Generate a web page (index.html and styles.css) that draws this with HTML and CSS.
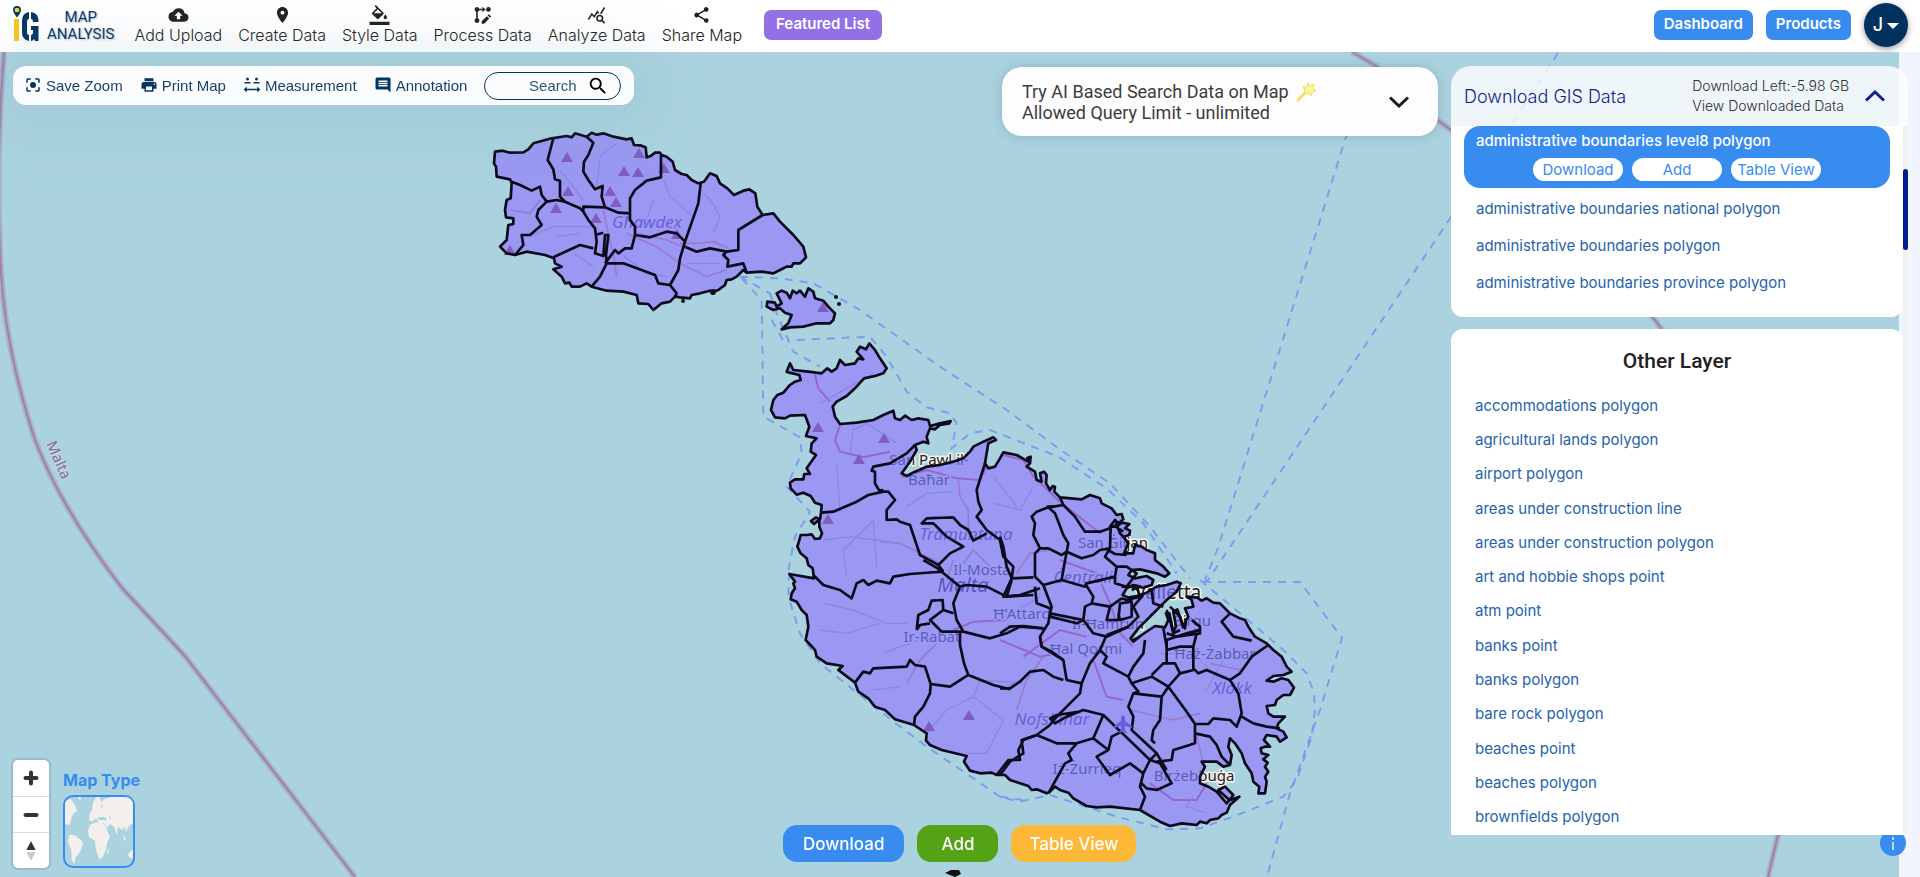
FILE: index.html
```html
<!DOCTYPE html>
<html lang="en">
<head>
<meta charset="utf-8">
<title>Map Analysis</title>
<link rel="stylesheet" href="styles.css">
</head>
<body>
<svg class="sprite" aria-hidden="true">
  <symbol id="i-cloud" viewBox="0 0 24 24"><path d="M19.35 10.04A7.49 7.49 0 0 0 12 4C9.11 4 6.6 5.64 5.35 8.04A5.99 5.99 0 0 0 0 14c0 3.31 2.69 6 6 6h13c2.76 0 5-2.24 5-5 0-2.64-2.05-4.78-4.65-4.96zM14 13v4h-4v-4H7l5-5 5 5h-3z"/></symbol>
  <symbol id="i-pin" viewBox="0 0 24 24"><path d="M12 2C8.13 2 5 5.13 5 9c0 5.25 7 13 7 13s7-7.75 7-13c0-3.87-3.13-7-7-7zm0 9.500a2.500 2.500 0 0 1 0-5 2.500 2.500 0 0 1 0 5z"/></symbol>
  <symbol id="i-fill" viewBox="0 0 24 24"><path d="M16.560 8.940 7.620 0 6.210 1.410l2.380 2.380-5.150 5.150a1.490 1.490 0 0 0 0 2.120l5.500 5.500c.29.290.680.440 1.060.440s.770-.150 1.060-.440l5.500-5.500c.590-.580.590-1.530 0-2.120zM5.210 10 10 5.210 14.790 10H5.210zM19 11.500s-2 2.170-2 3.500c0 1.100.9 2 2 2s2-.9 2-2c0-1.330-2-3.500-2-3.500zM0 20h24v4H0z"/></symbol>
  <symbol id="i-process" viewBox="0 0 24 24"><path d="M5 2a3 3 0 0 1 2.800 2H12V1.500L16 5l-4 3.500V6H7.800A3 3 0 0 1 6 7.800v8.400A3 3 0 1 1 4 16.200V7.800A3 3 0 0 1 5 2zM19.500 2a3 3 0 1 1 0 6 3 3 0 0 1 0-6zM20 11l3 3-1.500 1.500-3-3zM17.500 13.500l3 3L14 23h-3v-3z"/></symbol>
  <symbol id="i-analyze" viewBox="0 0 24 24"><path d="M19.880 18.470c.440-.700.700-1.510.700-2.390a4.500 4.500 0 1 0-4.500 4.500c.880 0 1.700-.260 2.390-.700L21.580 23 23 21.580zm-3.800.110a2.500 2.500 0 1 1 0-5 2.500 2.500 0 0 1 0 5zm-.360-8.500c-.740.020-1.450.180-2.100.450l-.550-.830-3.800 6.180-3.010-3.520-3.630 5.810L1 17l5-8 3 3.500L13 6zm2.590.5a6.100 6.100 0 0 0-2-.480L21.380 2 23 3.180z"/></symbol>
  <symbol id="i-share" viewBox="0 0 24 24"><path d="M18 16.080c-.760 0-1.440.300-1.960.770L8.910 12.700a3.300 3.300 0 0 0 0-1.390l7.050-4.110A2.990 2.990 0 1 0 15 5c0 .240.040.470.090.700L8.040 9.810a3 3 0 1 0 0 4.380l7.120 4.160a2.820 2.820 0 0 0-.080.650A2.920 2.920 0 1 0 18 16.080z"/></symbol>
  <symbol id="i-focus" viewBox="0 0 24 24"><path d="M5 15H3v4c0 1.100.9 2 2 2h4v-2H5zM5 5h4V3H5a2 2 0 0 0-2 2v4h2zM19 3h-4v2h4v4h2V5a2 2 0 0 0-2-2zM19 19h-4v2h4a2 2 0 0 0 2-2v-4h-2zM12 8a4 4 0 1 0 0 8 4 4 0 0 0 0-8z"/></symbol>
  <symbol id="i-print" viewBox="0 0 24 24"><path d="M19 8H5a3 3 0 0 0-3 3v6h4v4h12v-4h4v-6a3 3 0 0 0-3-3zm-3 11H8v-5h8v5zm3-7a1 1 0 1 1 0-2 1 1 0 0 1 0 2zM18 3H6v4h12z"/></symbol>
  <symbol id="i-measure" viewBox="0 0 24 24"><circle cx="6" cy="4" r="2"/><circle cx="18" cy="4" r="2"/><path d="M2 8h8v2H2zM14 8h8v2h-8zM5 14v3h14v-3l4 4-4 4v-3H5v3l-4-4z"/></symbol>
  <symbol id="i-note" viewBox="0 0 24 24"><path d="M22 4a2 2 0 0 0-2-2H4a2 2 0 0 0-2 2v12c0 1.100.9 2 2 2h14l4 4zM18 14H6v-2h12zm0-3H6V9h12zm0-3H6V6h12z"/></symbol>
  <symbol id="i-search" viewBox="0 0 24 24"><path d="M15.500 14h-.790l-.280-.270A6.500 6.500 0 1 0 13.730 14.430l.270.280v.790l5 4.990L20.490 19zm-6 0a4.500 4.500 0 1 1 0-9 4.500 4.500 0 0 1 0 9z"/></symbol>
</svg>

<header class="topbar">
  <a class="brand" href="#">
    <svg class="brand-mark" viewBox="0 0 26 36" aria-hidden="true">
      <path d="M4 0a4 4 0 0 1 4 4c0 2.600-4 7.500-4 7.500S0 6.600 0 4a4 4 0 0 1 4-4z" fill="#053563"/>
      <circle cx="4" cy="4" r="2.300" fill="#fdd32d"/>
      <path d="M1 13h5v22H1z" fill="#fbc51b"/>
      <path d="M16 6v7q-2 0-2 3v10q0 3 2 3v6q-7-1-7-9V15q0-8 7-9zM18 6q8 1 7.500 10H20q0-3-2-3zM18 20h7.500v15H22l-1-2q-1 2-3 2v-6q2 0 2-3v-2h-2z" fill="#053563"/>
    </svg>
    <span class="brand-name">MAP<br>ANALYSIS</span>
  </a>
  <nav class="menu">
    <button><svg class="icon-21"><use href="#i-cloud"/></svg>Add Upload</button>
    <button><svg><use href="#i-pin"/></svg>Create Data</button>
    <button><svg class="icon-21"><use href="#i-fill"/></svg>Style Data</button>
    <button><svg><use href="#i-process"/></svg>Process Data</button>
    <button><svg><use href="#i-analyze"/></svg>Analyze Data</button>
    <button><svg><use href="#i-share"/></svg>Share Map</button>
  </nav>
  <button class="chip chip-violet">Featured List</button>
  <div class="account">
    <a class="chip" href="#">Dashboard</a>
    <a class="chip" href="#">Products</a>
    <button class="avatar" aria-label="Account menu">J<span class="caret"></span></button>
  </div>
</header>

<main class="workspace">
  <svg class="map" viewBox="0 52 1899 825" preserveAspectRatio="xMidYMid slice" role="img" aria-label="Map of Malta">
    <defs>
      <path id="gozo" transform="translate(480 120) scale(.33333)" d="M45,95 L68,92 90,98 130,97 145,88 160,70 215,55 260,48 275,52 285,40 305,46 320,50 335,38 350,44 370,40 400,50 440,58 455,55 462,75 480,76 497,82 500,112 512,108 525,98 540,98 545,105 560,110 578,125 585,150 605,162 620,165 635,180 655,190 672,185 690,160 710,168 720,190 742,205 762,225 790,212 808,208 826,220 832,260 848,285 880,280 900,305 940,345 970,380 978,412 960,430 940,430 935,440 920,440 900,450 880,460 845,455 800,458 790,450 770,470 755,478 740,480 735,495 715,510 700,515 690,512 660,520 635,525 630,535 600,532 585,530 570,545 545,550 520,570 505,552 475,550 470,525 430,515 380,512 335,500 320,490 300,500 275,500 268,488 255,490 245,470 220,448 245,440 225,430 222,415 195,405 140,395 105,405 80,400 60,380 80,360 85,315 100,312 100,295 78,292 75,270 80,240 92,235 95,190 90,178 50,170 48,140 42,130Z"/>
      <path id="comino" transform="translate(480 120) scale(.33333)" d="M890,520 L905,512 920,518 930,535 938,512 950,520 960,512 975,530 985,505 1000,515 1005,535 1030,542 1045,560 1065,580 1060,600 1050,610 1010,610 970,620 930,622 905,628 925,610 935,585 915,578 900,565 880,570 860,560 862,545 885,548 890,560 905,550Z"/>
      <path id="malta" transform="translate(740 320) scale(.33333)" d="M222,775 L218,745 205,735 200,715 182,700 172,680 178,660 182,645 200,645 215,643 225,657 240,655 246,640 238,620 238,598 222,612 213,603 228,592 240,598 243,578 245,555 225,548 212,528 190,518 170,524 152,505 150,488 165,478 190,478 193,462 210,462 200,445 228,405 212,395 215,370 230,355 198,348 208,320 195,285 150,287 135,295 105,292 93,270 100,240 112,225 130,218 150,195 165,185 182,180 178,165 148,158 140,155 150,130 160,150 205,155 245,160 262,145 275,155 290,145 300,120 315,135 345,130 355,115 370,118 350,95 360,80 378,88 388,70 405,90 420,115 440,145 430,160 405,168 372,175 345,205 320,228 290,245 278,260 285,290 300,312 350,308 400,300 430,285 460,272 465,295 480,300 495,287 515,300 535,295 565,300 570,318 600,310 632,303 628,310 600,315 585,328 570,325 560,350 565,370 550,365 525,375 530,390 510,425 485,460 500,468 525,455 560,440 600,435 640,425 670,415 690,395 700,380 730,365 760,352 768,360 745,370 740,400 735,430 745,445 765,440 780,415 790,397 830,405 865,425 862,414 872,410 870,430 860,440 885,455 890,480 905,485 900,460 912,455 920,465 918,490 930,510 938,498 945,500 943,515 960,532 1025,538 1050,525 1080,535 1085,550 1115,565 1130,585 1145,582 1150,598 1135,610 1125,600 1110,620 1130,620 1145,608 1168,612 1155,625 1170,632 1168,645 1150,650 1165,670 1152,700 1180,700 1185,675 1205,680 1220,690 1245,700 1245,720 1270,740 1288,760 1275,770 1250,760 1200,748 1175,750 1165,765 1185,775 1220,768 1240,780 1235,795 1210,803 1180,795 1160,805 1148,825 1165,833 1190,828 1220,818 1250,800 1280,795 1310,785 1322,790 1310,815 1280,840 1260,860 1235,885 1210,910 1195,925 1172,955 1180,965 1205,945 1245,918 1275,922 1285,900 1278,880 1288,880 1300,935 1308,920 1300,875 1312,868 1325,905 1335,925 1338,900 1345,890 1335,865 1360,860 1355,840 1340,830 1370,832 1385,842 1400,835 1420,848 1440,850 1470,880 1500,895 1515,900 1525,920 1545,950 1580,970 1600,990 1625,1010 1640,1040 1655,1055 1630,1065 1600,1068 1580,1082 1600,1085 1625,1075 1645,1080 1662,1103 1650,1125 1630,1125 1610,1140 1605,1155 1580,1158 1585,1180 1600,1190 1635,1190 1615,1210 1610,1225 1630,1235 1640,1252 1620,1265 1610,1250 1580,1245 1572,1260 1590,1280 1575,1280 1562,1285 1565,1300 1585,1305 1570,1318 1583,1328 1575,1340 1585,1355 1575,1370 1580,1385 1575,1420 1555,1420 1558,1400 1540,1385 1535,1360 1515,1330 1505,1300 1485,1270 1470,1255 1465,1280 1475,1305 1470,1335 1450,1340 1430,1325 1385,1325 1395,1340 1380,1370 1380,1390 1405,1400 1430,1415 1460,1450 1468,1440 1435,1410 1455,1400 1480,1425 1470,1440 1498,1430 1470,1455 1460,1478 1445,1485 1435,1495 1410,1500 1400,1510 1380,1505 1370,1515 1325,1510 1290,1518 1260,1505 1200,1470 1110,1460 1070,1462 1040,1458 1000,1435 985,1418 960,1410 945,1400 930,1415 920,1420 890,1408 875,1410 865,1398 840,1390 810,1380 795,1365 770,1365 755,1358 720,1360 690,1352 672,1325 680,1308 605,1290 570,1275 558,1262 560,1240 522,1215 465,1198 435,1170 405,1160 385,1135 355,1115 345,1088 295,1050 308,1038 260,1030 230,1010 225,990 197,960 205,920 200,885 185,870 170,845 152,838 155,820 165,805 160,790 165,785 148,762Z"/>
    </defs>

    <g class="sea-border">
      <path d="M4,52 Q-4,150 0,250 Q2,340 35,440 Q62,510 122,588 Q150,618 184,655 L355,877"/>
      <path d="M1352,52 L1376,66 L1440,122 Q1550,200 1655,320 Q1760,460 1790,620 Q1802,730 1778,835 L1768,877"/>
    </g>
    <g class="sea-border-core">
      <path d="M4,52 Q-4,150 0,250 Q2,340 35,440 Q62,510 122,588 Q150,618 184,655 L355,877"/>
      <path d="M1352,52 L1376,66 L1440,122 Q1550,200 1655,320 Q1760,460 1790,620 Q1802,730 1778,835 L1768,877"/>
    </g>

    <g class="ferry">
      <path d="M1558,53 L1451,217 1208,580 1192,590M1365,75 L1345,140 1218,548 1205,580M1203,582 L1300,582 1342,638 1320,710 1290,793 1267,877"/>
      <path transform="translate(1000 620) scale(.33333)" d="M600,-120 L750,5 850,90 920,160 942,220 945,270 935,350 890,480 850,530 700,590 600,625 500,628 350,590 150,525 60,545 0,530"/>
      <path transform="translate(760 560) scale(.33333)" d="M720,710 L800,722 M720,710 L640,655 500,560 400,485 300,405 180,310 120,220 85,110 88,20"/>
      <path transform="translate(740 320) scale(.33333)" d="M145,750 L165,650 210,575 140,500 185,400 180,352 70,290 65,-60 0,-130 M0,-130 L120,-125 220,-110 360,-30 600,140 800,270 955,385 1110,490 1230,620 1350,775M0,-130 L90,-80 M90,-80 L110,-20 160,95 240,140 M170,60 L390,50 440,110 500,215 560,262 630,280 650,310 635,385 690,340 750,330 955,410 1100,505 1210,610 1310,760M95,0 L140,80"/>
    </g>

    <g class="land">
      <use href="#gozo"/><use href="#comino"/><use href="#malta"/>
    </g>

    <g class="roads">
      <path transform="translate(740 320) scale(.33333)" class="road-major" d="M225,165 L235,205 270,245M300,315 L285,360 300,395 370,412 450,395M485,470 L560,450 650,475 720,480 740,440 M790,405 L850,420 880,470 960,545 1080,640M960,720 L1070,760 1110,850 1140,940 1180,980M850,1010 L960,930 1040,950 M780,960 L900,1010 1000,990M1060,1020 L1100,1130 1150,1140M1230,1390 L1300,1440 1370,1440 1400,1390M640,930 L700,905 800,900"/>
      <path transform="translate(740 320) scale(.33333)" class="road-mid" d="M655,480 L660,530 685,570 685,630M420,665 L480,670 600,730M670,730 L700,690 760,750M500,1090 L540,1020 600,960M830,1170 L860,1080 910,1010M1170,1170 L1300,1200 1380,1180M1370,1250 L1390,1330M1410,1030 L1500,1050M640,720 L620,780M830,760 L870,700 930,690"/>
      <path transform="translate(480 120) scale(.33333)" class="road-mid" d="M90,270 L150,280 180,240M370,270 L385,340 400,400 410,470M440,340 L530,380 600,430 680,470 740,450M600,370 L660,370 700,365 745,385M470,340 L560,360 610,380"/>
      <path transform="translate(740 320) scale(.33333)" class="road-minor" d="M250,660 L330,650 410,660 470,670M320,770 L310,690 400,600 410,740M300,575 L290,430M500,560 L560,520 640,515M240,250 L400,160M330,400 L340,330 380,310 470,370M240,930 L320,940 420,910M250,850 L340,870 440,910 500,910M400,1110 L480,1100M430,1000 L560,950M800,1100 L900,1050M560,1240 L620,1170 700,1130 790,1200 740,1300 680,1300M700,1130 L720,1080 860,1090M780,900 L900,830M1260,1000 L1360,1000 1460,1100M1400,1110 L1450,1020M1400,1480 L1340,1460 1360,1430M760,470 L800,520 830,560M880,500 L840,570 760,550"/>
      <path transform="translate(480 120) scale(.33333)" class="road-minor" d="M150,350 L220,320 340,320M230,350 L300,340M240,150 L280,200 310,240M360,120 L350,200M410,70 L360,110M550,180 L570,230 640,290M700,340 L720,290 700,250 670,220M280,400 L340,440M420,400 L500,460 560,470M620,430 L720,430M520,240 L500,300"/>
    </g>

    <g class="peaks">
      <path d="M567,152l6,10h-12zM568,186l6,10h-12zM556,203l6,10h-12zM624,166l6,10h-12zM639,148l6,10h-12zM638,167l6,10h-12zM610,186l6,10h-12zM616,197l6,10h-12zM596,213l6,10h-12zM664,163l6,10h-12zM677,229l6,10h-12zM510,245l6,10h-12zM823,302l6,10h-12zM818,422l6,10h-12zM884,433l6,10h-12zM859,454l6,10h-12zM828,514l6,10h-12zM969,710l6,10h-12zM929,721l6,10h-12z"/>
    </g>

    <g class="places">
      <text class="region" x="647" y="228">Għawdex</text>
      <text x="929" y="465">San Pawl il-</text>
      <text x="929" y="485">Baħar</text>
      <text class="region" x="966" y="540">Tramuntana</text>
      <text x="982" y="575">Il-Mosta</text>
      <text class="country" x="963" y="592">Malta</text>
      <text x="1022" y="619">Ħ'Attard</text>
      <text x="932" y="642">Ir-Rabat</text>
      <text x="1113" y="548">San Ġiljan</text>
      <text class="region" x="1083" y="583">Ċentrali</text>
      <text class="capital" x="1168" y="599">Valletta</text>
      <text x="1108" y="629">Il-Ħamrun</text>
      <text x="1192" y="626">Birgu</text>
      <text x="1086" y="654">Ħal Qormi</text>
      <text x="1215" y="659">Ħaż-Żabbar</text>
      <text class="region" x="1232" y="694">Xlokk</text>
      <text class="region" x="1052" y="725">Nofsinhar</text>
      <text x="1087" y="774">Iż-Żurrieq</text>
      <text x="1194" y="781">Birżebbuġa</text>
    </g>
    <text class="border-name" transform="translate(54 462) rotate(66)">Malta</text>

    <g class="tint">
      <use href="#gozo"/><use href="#comino"/><use href="#malta"/>
    </g>

    <g class="outline">
      <use href="#gozo"/><use href="#comino"/><use href="#malta"/>
      <path transform="translate(480 120) scale(.33333)" d="M220,55 L212,85 203,120 220,148 225,178 240,182 240,230 255,245 300,265 310,275M320,50 L340,68 325,105 312,125 310,155 325,180 345,208 368,198 365,230 375,262 310,260 310,275M375,262 L415,278 450,280 450,235 465,210 500,182 543,172 543,105M450,280 L450,300 465,320 465,345 455,385 435,385 415,400 405,390 375,430M310,275 L325,300 345,325 350,365 345,400 370,408 375,345 385,345 378,405 380,430 M345,345 L370,338M95,185 L120,195 155,212 180,200 185,225 200,245 175,270 170,290 185,315 150,345 125,345 130,375 105,405M200,245 L230,240 255,245M220,412 L300,375 340,385M380,430 L360,470 335,500M380,430 L430,430 525,465 535,490 570,495 590,520 585,530M465,345 L510,352 560,335 590,340 615,365 655,250 662,190M615,365 L600,415 595,450 570,495M615,380 L650,395 690,385 740,395 775,390 775,330 848,285M740,395 L730,405 745,420 742,440 790,430 800,458"/>
      <path transform="translate(740 320) scale(.33333)" d="M525,375 L500,400 450,430 400,440 395,452 405,455 405,490 418,512 430,510M245,578 L280,575 350,545 385,525 430,515 445,515 465,540 440,570 440,600 470,598 480,605 510,615 535,690 540,705 595,735 610,755M595,735 L630,700 670,680 620,650 580,610 545,610 560,595 640,592 660,615 685,630 700,662 740,640M735,430 L710,510 715,545 725,570 710,590 740,630 780,660 790,710 820,740 815,775M945,560 L920,560"/>
      <path transform="translate(1000 420) scale(.33333)" d="M180,232 L190,255 145,262 110,275 95,290 105,310 100,345 120,385 145,385 185,405 200,395 205,370 190,345 175,305 165,280 145,262M190,255 L225,290 255,335 300,335 330,325M200,395 L190,450 185,480 130,495 105,470 105,400 120,385M200,395 L245,415 280,405 300,390 330,385 315,410 350,440 345,470 260,490 255,500 185,480M330,385 L332,320M315,385 L345,402 380,405M350,440 L380,440 410,460 380,500 345,490 345,470M255,490 L280,530 275,550 330,560 365,535M275,550 L255,560 250,600 150,580 155,560 130,495M105,500 L110,550 150,565M35,475 L100,472M35,475 L10,530 60,525 120,505M0,350 L10,380 20,440 35,475M330,560 L320,600 355,600 360,550 395,545 395,590 360,600 355,580M150,580 L145,610 120,650 125,680 190,720M250,600 L280,640 320,650 385,620 415,590 400,560 430,525M365,535 L395,545M0,640 L30,620 70,618 130,625M250,600 L230,610 150,590M365,500 L410,500 420,530 380,540M455,510 L460,550 490,560M600,630 L560,640 500,660 M500,640 L530,650 600,640 600,620 575,600M690,580 L665,605 700,650 755,662M490,625 L500,680"/>
      <path transform="translate(1000 620) scale(.33333)" d="M120,50 L125,80 155,95 190,120 200,180 245,190 240,220 160,300 150,315 110,345 65,360 70,400 30,425 0,465M320,45 L300,90 270,130 245,190M320,45 L385,20M300,90 L320,110 310,130 385,170 400,140 430,100 435,60M385,170 L395,190 455,170 505,200 540,160 525,130 490,130 455,165M500,60 L500,130M500,90 L540,80 580,80 580,150 540,160M590,40 L580,80M580,145 L595,160 620,150 690,180 720,160 755,110 805,75M690,180 L715,220 725,280 710,320 690,300 640,295 625,312 585,312 560,275 505,200M725,290 L760,310 800,320 840,325M585,312 L585,370 520,390 515,420 470,425M585,340 L630,350 650,375 665,410 690,435M505,200 L485,230 480,300 460,330 455,360 465,370M485,230 L400,220 385,260 400,290 395,330 470,400 450,420 310,285 250,270 200,290 165,310 150,295 170,285 240,275M395,190 L415,215 400,220M310,285 L280,355 325,390 335,350 365,335M110,345 L170,370 230,370 280,355M230,370 L205,400 215,420 195,430 145,520M325,390 L290,410 330,465 390,430 430,460 450,420M430,460 L420,500 435,530 420,570M425,490 L440,505 470,510 515,490 480,430 450,420M0,205 L30,205 60,185 90,155 130,150 160,170 190,180M470,400 L500,450"/>
      <path transform="translate(760 560) scale(.33333)" d="M160,45 L190,75 240,90 275,115 290,70 310,60 325,75 350,62 390,70 400,50 450,42 545,35 600,80M490,0 L550,35M600,80 L580,130 590,180 610,215M600,80 L620,75 680,80 740,110 820,105M740,110 L755,60M470,210 L475,165 505,150 515,122 548,120 550,150 510,180 545,215 610,215M550,150 L580,160M470,210 L480,195 510,190M600,215 L600,255 612,310 625,345 570,380 512,372 510,400 490,440 465,470 462,495M512,372 L495,320 465,315 450,300 440,320 340,325 330,340 310,335 285,368M610,215 L690,235 740,220 780,200 850,205M625,345 L700,375 750,388M710,645 L745,600 780,600 775,570 790,540 830,525"/>
      <path transform="translate(740 320) scale(.33333)" d="M1280,870 L1290,900 1300,940 1320,930M1290,860 L1320,890 1330,925M1125,600 L1140,640 1150,650M1120,615 L1150,635M1180,960 L1200,950M1175,810 L1200,800 1180,795"/>
    </g>
    <path class="islet" d="M945,873l6,-3 8,0 2,4 -6,3z"/>
    <g class="islet"><circle cx="836" cy="297" r="2"/><circle cx="839" cy="304" r="2"/><circle cx="683" cy="301" r="2"/><circle cx="713" cy="292" r="3"/></g>
    <path class="plane" transform="translate(1123 723)" d="M0,-8l2,2v4l7,5v2l-7,-2v4l2,2v1l-4,-1 -4,1v-1l2,-2v-4l-7,2v-2l7,-5v-4z"/>
  </svg>

  <div class="toolbar">
    <button><svg><use href="#i-focus"/></svg>Save Zoom</button>
    <button><svg><use href="#i-print"/></svg>Print Map</button>
    <button><svg><use href="#i-measure"/></svg>Measurement</button>
    <button><svg><use href="#i-note"/></svg>Annotation</button>
    <label class="search"><input type="text" placeholder="Search" aria-label="Search"><svg><use href="#i-search"/></svg></label>
  </div>

  <button class="ai-panel">
    <span class="ai-text">Try AI Based Search Data on Map
      <svg class="wand" viewBox="0 0 20 20" aria-hidden="true"><path d="M1 19 L11 9" stroke="#f3dc63" stroke-width="2.500"/><path d="M12 1l2 3 4-2-1 4 3 3-4 1-1 4-3-3-4 1 1-4-2-3 4 0z" fill="#fbf3a0" stroke="#f0e04e"/></svg>
      <br>Allowed Query Limit - unlimited</span>
    <svg class="chevron" viewBox="0 0 20 12" aria-hidden="true"><path d="M1 1.500l9 8.500 9-8.500"/></svg>
  </button>

  <aside class="data-panel">
    <div class="panel-head">
      <h2>Download GIS Data</h2>
      <div class="quota"><span>Download Left:-5.98 GB</span><a href="#">View Downloaded Data</a></div>
      <button class="collapse" aria-label="Collapse"><svg viewBox="0 0 20 12"><path d="M1 10.500L10 2l9 8.500"/></svg></button>
    </div>
    <div class="panel-scroll">
      <div class="panel-body">
        <section class="group boundaries">
          <div class="selected">
            <a href="#">administrative boundaries level8 polygon</a>
            <div class="pills"><button>Download</button><button>Add</button><button>Table View</button></div>
          </div>
          <ul>
            <li><a href="#">administrative boundaries national polygon</a></li>
            <li><a href="#">administrative boundaries polygon</a></li>
            <li><a href="#">administrative boundaries province polygon</a></li>
          </ul>
        </section>
        <section class="group others">
          <h3>Other Layer</h3>
          <ul>
            <li><a href="#">accommodations polygon</a></li>
            <li><a href="#">agricultural lands polygon</a></li>
            <li><a href="#">airport polygon</a></li>
            <li><a href="#">areas under construction line</a></li>
            <li><a href="#">areas under construction polygon</a></li>
            <li><a href="#">art and hobbie shops point</a></li>
            <li><a href="#">atm point</a></li>
            <li><a href="#">banks point</a></li>
            <li><a href="#">banks polygon</a></li>
            <li><a href="#">bare rock polygon</a></li>
            <li><a href="#">beaches point</a></li>
            <li><a href="#">beaches polygon</a></li>
            <li><a href="#">brownfields polygon</a></li>
          </ul>
        </section>
      </div>
      <div class="track"><div class="thumb"></div></div>
    </div>
  </aside>

  <button class="info" aria-label="Attribution"><svg viewBox="0 0 26 26"><path d="M12 7h2v3h-2zM12 12h2v8h-2z"/></svg></button>

  <div class="map-controls">
    <div class="zoom">
      <button aria-label="Zoom in"><svg viewBox="0 0 20 20"><path d="M10 4.500v11M4.500 10h11"/></svg></button>
      <button aria-label="Zoom out"><svg viewBox="0 0 20 20"><path d="M4.500 10h11"/></svg></button>
      <button aria-label="Reset north"><svg viewBox="0 0 20 24"><path class="north" d="M10 1l5 10H5z"/><path class="south" d="M10 23l5-10H5z"/></svg></button>
    </div>
    <div class="map-type">
      <span id="map-type-label">Map Type</span>
      <button aria-labelledby="map-type-label">
        <svg viewBox="0 0 68 69" aria-hidden="true">
          <path d="M0 4L6 2 10 8 12 14 8 17 6 22 5 28 0 27zM13 0h3l-1 4zM4 38l5 0 7 5 2 4-3 8-4 5-2 7-2-3-1-12-3-7zM28 6l3-6h4l1 5 4-3 6-2h22v26l-4 3-3 6-1-5-3 3-4-3-1 8-3-8-4-3-3 4-3-5-4 1-4-6-4 4-3-2 1-8 2-1zM25 28l6-3 8 2 4 8 2 5-3 6-1 7-4 8-3 1-3-9-1-9-6-4-1-6zM43 52l1 1-1 5-1-3zM58 38l3 4-2 2zM63 57l5-5v10l-4-2zM30 17l2-1v4l-2 1z"/>
          <path class="inland" d="M33 20h7l2 3h-8zM44 17l2 4-1 2zM36 9l2-2-1 5z"/>
        </svg>
      </button>
    </div>
  </div>

  <div class="actions">
    <button class="act act-blue">Download</button>
    <button class="act act-green">Add</button>
    <button class="act act-amber">Table View</button>
  </div>
</main>
</body>
</html>
```
FILE: styles.css
```css
* { box-sizing: border-box; }
body { margin: 0; height: 100vh; display: flex; flex-direction: column; overflow: hidden; background: #f0f5ff; font-family: Inter, "Liberation Sans", sans-serif; }
button { font: inherit; color: inherit; background: none; border: 0; padding: 0; cursor: pointer; }
a { color: inherit; text-decoration: none; }
ul { list-style: none; margin: 0; padding: 0; }
h2, h3 { margin: 0; }
.sprite { position: absolute; width: 0; height: 0; }

.topbar { height: 52px; flex: none; display: flex; align-items: center; padding: 0 12px 0 13px; background: #fff; }
.brand { display: flex; align-items: center; gap: 8px; color: #053563; }
.brand-mark { width: 26px; height: 36px; margin-bottom: 4px; }
.brand-name { font-family: Roboto, sans-serif; font-size: 15px; line-height: 17px; text-align: center; text-shadow: 1px 1px 2px rgba(5, 53, 99, .3); }
.menu { display: flex; gap: 16px; margin-left: 20px; padding-bottom: 3px; color: #212121; font-size: 16px; font-weight: 300; }
.menu button { display: flex; flex-direction: column; align-items: center; line-height: 20px; }
.menu svg { width: 19px; height: 20px; fill: #212121; }
.menu .icon-21 { width: 21px; }
.chip { padding: 0 10px 2px; height: 30px; border-radius: 7px; display: inline-flex; align-items: center; background: #388cf0; color: #fff; font-size: 15px; font-weight: 600; margin-bottom: 3px; }
.chip-violet { background: #9370e6; margin-left: 22px; padding: 0 12px 2px; }
.account { margin-left: auto; display: flex; align-items: center; gap: 13px; }
.avatar { width: 44px; height: 44px; border-radius: 50%; background: #01315f; color: #fff; font-size: 18px; font-weight: 500; display: flex; align-items: center; justify-content: center; gap: 4px; box-shadow: 0 2px 6px rgba(0, 0, 0, .4); margin-bottom: 3px; }
.caret { border: 6px solid transparent; border-top-color: #fff; border-bottom: 0; margin-top: 3px; }

.workspace { position: relative; flex: 1; min-height: 0; padding-right: 21px; }
.map { display: block; width: 100%; height: 100%; background: #aad3df; }
.sea-border path { fill: none; stroke: #a899ba; stroke-width: 6; opacity: .6; }
.sea-border-core path { fill: none; stroke: #9a76a4; stroke-width: 2; opacity: .8; }
.ferry path { fill: none; stroke: #7b92f0; stroke-width: 2; stroke-dasharray: 8 7; vector-effect: non-scaling-stroke; opacity: .85; }
.land { fill: #f2efe9; }
.roads path { fill: none; }
.road-major { stroke: #e0496e; stroke-width: 6; }
.road-mid { stroke: #f08a70; stroke-width: 5; }
.road-minor { stroke: #b8b4c0; stroke-width: 4; }
.peaks { fill: #9a3038; }
.places text { font-family: "Noto Sans", sans-serif; font-size: 15px; text-anchor: middle; fill: #222; stroke: #f6f4ee; stroke-width: 3; paint-order: stroke; stroke-linejoin: round; }
.places .region { font-style: italic; font-size: 17px; fill: #5c2c86; }
.places .country { font-style: italic; font-size: 20px; fill: #200a50; }
.places .capital { font-size: 19px; }
.border-name { font-family: "Noto Sans", sans-serif; font-size: 15px; text-anchor: middle; fill: #86689c; stroke: #c4d6e2; stroke-width: 2; paint-order: stroke; }
.tint { fill: #7473f6; opacity: .7; }
.outline { fill: none; stroke: #0c0a1c; stroke-width: 8; stroke-linejoin: round; }
.islet { fill: #111; }
.plane { fill: #6a5ce0; }

.toolbar { position: absolute; left: 13px; top: 14px; height: 39px; display: flex; align-items: center; gap: 17px; padding: 0 13px 0 11px; border-radius: 13px; background: #fbfcfd; box-shadow: 0 2px 60px 20px rgba(120, 160, 175, .18); color: #1a406b; font-family: "Liberation Sans", Arial, sans-serif; font-size: 15px; }
.toolbar button { display: flex; align-items: center; gap: 4px; padding-bottom: 1px; }
.toolbar svg { width: 18px; height: 18px; fill: #053563; }
.search { display: flex; align-items: center; width: 137px; height: 28px; border: 1px solid #053563; border-radius: 14px; padding-right: 11px; }
.search input { flex: 1; min-width: 0; border: 0; outline: 0; background: none; font: inherit; padding: 0 0 0 33px; text-align: center; color: #1a406b; }
.search input::placeholder { color: #335577; opacity: 1; }
.toolbar .search svg { width: 22px; height: 22px; fill: #000; }

.ai-panel { position: absolute; left: 1002px; right: 482px; top: 15px; min-height: 69px; padding: 0 29px 0 20px; display: flex; align-items: center; justify-content: space-between; text-align: left; border-radius: 20px; background: #fdfdfe; box-shadow: 0 0 12px rgba(70, 110, 125, .3); color: #3c3c3c; font-family: Roboto, sans-serif; font-size: 18px; font-weight: 400; line-height: 21px; }
.wand { width: 20px; height: 20px; margin-left: 3px; vertical-align: bottom; fill: none; }
.chevron { width: 20px; height: 12px; fill: none; stroke: #1c1c1c; stroke-width: 3; }

.data-panel { position: absolute; z-index: 2; right: 12px; top: 14px; bottom: 42px; width: 457px; display: flex; flex-direction: column; }
.panel-head { height: 60px; flex: none; display: flex; align-items: center; padding: 0 23px 0 13px; border-radius: 20px 20px 0 0; background: rgba(255, 255, 255, .8); }
.panel-head h2 { flex: 1; color: #101f8c; font-size: 18px; font-weight: 300; }
.quota { display: flex; flex-direction: column; color: #2c3033; font-size: 14px; font-weight: 300; line-height: 20px; margin-right: 16px; }
.collapse svg { display: block; width: 20px; height: 12px; fill: none; stroke: #101f8c; stroke-width: 3; }
.panel-scroll { flex: 1; min-height: 0; display: flex; }
.panel-body { flex: 1; overflow: hidden; color: #2563ae; font-size: 15px; }
.group { background: #fff; }
.boundaries { min-height: 191px; border-radius: 0 0 12px 12px; padding: 0 13px; }
.selected { height: 62px; border-radius: 16px; background: #388cf0; color: #fff; padding: 5px 12px 0; font-weight: 500; line-height: 20px; }
.pills { display: flex; justify-content: center; gap: 9px; margin-top: 7px; }
.pills button { min-width: 90px; height: 23px; border-radius: 12px; background: #fff; color: #388cf0; font-weight: 400; line-height: 22px; }
.boundaries ul { padding: 2px 12px 0; }
.boundaries li { line-height: 37px; }
.others { margin-top: 12px; border-radius: 12px 12px 0 0; padding: 20px 24px 0; min-height: 520px; }
.others h3 { color: #222; font-family: Roboto, sans-serif; font-size: 21px; font-weight: 500; line-height: 24px; text-align: center; margin-bottom: 15px; }
.others ul { display: grid; grid-auto-rows: 1fr; height: 446px; align-items: center; }
.track { width: 5px; background: #f1f1f1; padding-top: 43px; }
.thumb { height: 81px; border-radius: 3px; background: #001e8c; }
.info { position: absolute; right: 14px; bottom: 21px; width: 26px; height: 26px; border-radius: 50%; background: #388cf0; fill: #b9dcf5; }
.info svg { display: block; }

.map-controls { position: absolute; left: 13px; bottom: 9px; display: flex; align-items: flex-end; gap: 14px; }
.zoom { width: 36px; border-radius: 5px; background: #fff; box-shadow: 0 0 0 2px rgba(0, 0, 0, .1); display: flex; flex-direction: column; }
.zoom button { height: 36px; display: grid; place-items: center; border-top: 1px solid #ddd; }
.zoom button:first-child { border-top: 0; }
.zoom svg { width: 20px; height: 22px; fill: none; stroke: #333; stroke-width: 4; stroke-linecap: round; }
.zoom .north { fill: #333; stroke: none; }
.zoom .south { fill: #ccc; stroke: none; }
.map-type { display: flex; flex-direction: column; gap: 5px; color: #388cf0; font-size: 16px; font-weight: 700; line-height: 20px; }
.map-type button { width: 72px; height: 73px; border: 2px solid #388cf0; border-radius: 10px; overflow: hidden; background: #aad3df; }
.map-type svg { display: block; fill: #f3efec; }
.map-type .inland { fill: #aad3df; }

.actions { position: absolute; left: 783px; bottom: 15px; display: flex; gap: 13px; }
.act { height: 37px; padding: 0 20px; border-radius: 14px; color: #fff; font-size: 17px; font-weight: 500; }
.act-blue { background: #388cf0; }
.act-green { background: #54a316; padding: 0 24px; }
.act-amber { background: #fdb837; padding: 0 18px; }
```
